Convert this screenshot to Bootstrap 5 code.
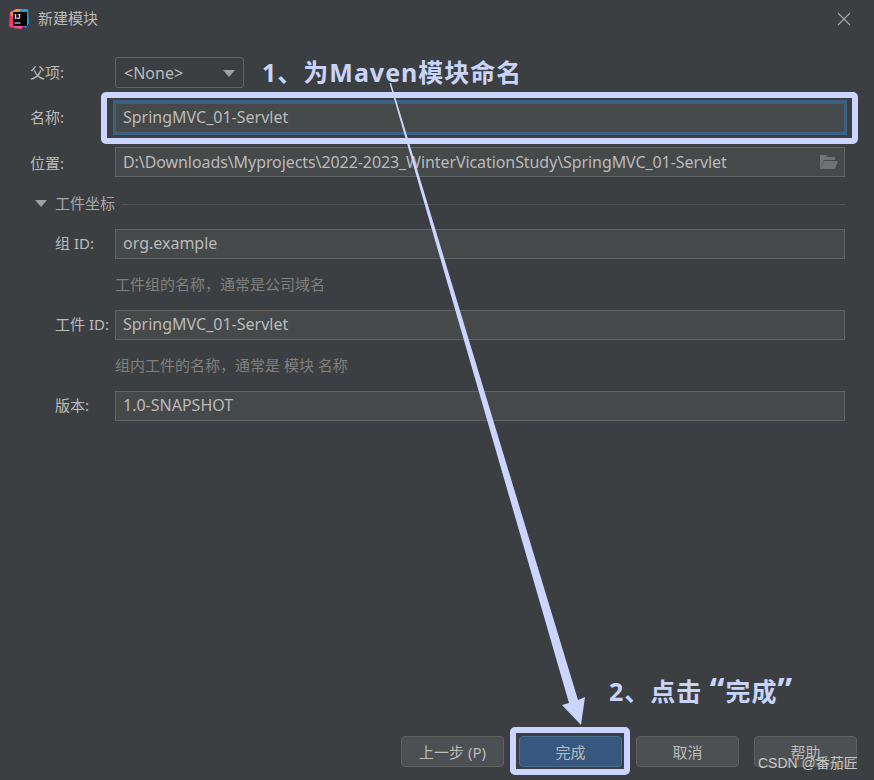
<!DOCTYPE html>
<html lang="zh-CN"><head><meta charset="utf-8">
<link href="https://cdn.jsdelivr.net/npm/bootstrap@5.3.0/dist/css/bootstrap.min.css" rel="stylesheet">
<style>
html,body{margin:0;background:#3c3f41;}
body{font-family:"Noto Sans","Noto Sans CJK SC",sans-serif;font-size:15px;color:#bbbbbb;}
.dlg{width:874px;height:780px;position:relative;overflow:hidden;background:#3c3f41;}
.ttl{height:38px;padding-left:9px;}
.ttl-t{margin-left:9px;font-size:15px;color:#bbb;margin-top:-2px;}
.xbtn{margin-left:auto;margin-right:23px;}
.frm{padding:19px 29px 0 30px;}
.lab{width:85px;flex:none;white-space:nowrap;line-height:20px;margin-top:-3px;}
.lab-up{margin-top:-1px;}
.lab-dn{margin-top:1px;}
.lab2{padding-left:25px;}
.fld{flex:1;height:30px;background:#45494a;border:1px solid #646464;color:#bbb;padding:0 7px;font-size:16px;line-height:26px;white-space:nowrap;position:relative;}
.fld-path{line-height:28px;letter-spacing:-.08px;}
.fld.foc{border-color:#3d6185;box-shadow:0 0 0 2px #3d6185,0 -1px 0 2px #3d6185;}
.sel{width:129px;height:31px;flex:none;border:1px solid #646464;border-radius:3px;background:#3c3f41;padding:0 8px;font-size:16px;line-height:31px;position:relative;}
.tri{width:0;height:0;border-left:6px solid transparent;border-right:6px solid transparent;border-top:7px solid #a0a0a0;display:inline-block;}
.sel .tri{position:absolute;right:8px;top:12px;}
.r1{height:31px;margin-bottom:15px;}
.r2{height:30px;margin-bottom:14px;}
.r3{height:30px;}
.sec{height:20px;margin-top:16px;margin-bottom:16px;font-size:15px;color:#a9a9a9;padding-left:5px;}
.sec .tri{margin-right:8px;}
.sec-l{flex:1;height:1px;background:#515151;margin-left:7px;margin-top:2px;}
.hint{padding-left:85px;color:#808080;font-size:15px;height:51px;line-height:51px;}
.foot{position:absolute;left:401px;top:736px;}
.fbtn{width:103px;height:31px;padding:0;border:1px solid #5e6060;border-radius:4px;background:#4c5052;color:#bbb;font-size:15px;line-height:28px;margin-right:15px;--bs-btn-hover-bg:#4c5052;}
.fbtn.pri{background:#365880;border-color:#4c708c;margin-right:14px;}
.ovl{position:absolute;left:0;top:0;pointer-events:none;}
.note{position:absolute;font-weight:700;color:#c9d4fb;font-size:25px;letter-spacing:1px;line-height:32px;white-space:nowrap;}
.qm{font-size:33px;line-height:0;}
.wm{position:absolute;left:758px;top:753px;font-family:"Liberation Sans","Noto Sans CJK SC",sans-serif;font-size:14px;line-height:20px;color:#c8c8c8;white-space:nowrap;}
</style></head><body>
<div class="dlg">
  <div class="ttl d-flex align-items-center">
    <svg width="20" height="20" viewBox="0 0 20 20"><path d="M1 3 9 0l3 3-9 16-3-2z" fill="#f9346f"/><path d="M9 0h10l1 14-3 5-6-4z" fill="#1f9ce8"/><path d="M2 15l3 4 7 1 4-4z" fill="#f24b9a"/><path d="M1 4 7 0h5L4 9z" fill="#f79a33"/><rect x="4" y="3" width="14" height="14" fill="#000"/><text x="5.5" y="10" font-size="7" font-weight="700" fill="#fff" font-family="Liberation Sans">IJ</text><rect x="5.5" y="13.5" width="6" height="1" fill="#fff"/></svg>
    <span class="ttl-t">新建模块</span>
    <svg class="xbtn" width="14" height="14" viewBox="0 0 14 14"><path d="M1 1 13 13M13 1 1 13" stroke="#a8a8a8" stroke-width="1.1" fill="none"/></svg>
  </div>
  <div class="frm">
    <div class="d-flex align-items-center r1"><span class="lab lab-up">父项:</span><div class="sel">&lt;None&gt;<i class="tri"></i></div></div>
    <div class="d-flex align-items-center r2"><span class="lab">名称:</span><div class="fld foc">SpringMVC_01-Servlet</div></div>
    <div class="d-flex align-items-center r3"><span class="lab lab-dn">位置:</span><div class="fld fld-path">D:\Downloads\Myprojects\2022-2023_WinterVicationStudy\SpringMVC_01-Servlet
      <svg class="ovl" style="left:703px;top:6px" width="20" height="17" viewBox="0 0 20 17"><path d="M1 1h6l2 2h7v3H5L1 15z" fill="#6e7375"/><path d="M5 7h14l-3 8H1z" fill="#6e7375"/></svg></div></div>
    <div class="sec d-flex align-items-center"><i class="tri"></i><span>工件坐标</span><div class="sec-l"></div></div>
    <div class="d-flex align-items-center r3"><span class="lab lab2">组 ID:</span><div class="fld">org.example</div></div>
    <div class="hint">工件组的名称，通常是公司域名</div>
    <div class="d-flex align-items-center r3"><span class="lab lab2">工件 ID:</span><div class="fld">SpringMVC_01-Servlet</div></div>
    <div class="hint">组内工件的名称，通常是 模块 名称</div>
    <div class="d-flex align-items-center r3"><span class="lab lab2">版本:</span><div class="fld">1.0-SNAPSHOT</div></div>
  </div>
  <div class="foot d-flex">
    <button class="btn fbtn" type="button">上一步 (P)</button>
    <button class="btn fbtn pri" type="button">完成</button>
    <button class="btn fbtn" type="button">取消</button>
    <button class="btn fbtn" type="button">帮助</button>
  </div>
  <svg class="ovl" width="874" height="780" viewBox="0 0 874 780">
    <rect x="104" y="95" width="751" height="46" rx="2" fill="none" stroke="#ccd5ff" stroke-width="6"/>
    <rect x="513" y="730" width="114" height="42" rx="2" fill="none" stroke="#ccd5ff" stroke-width="6"/>
    <path d="M389.5 83 391 83 578 700 585 697 581 725 562 705 569 703z" fill="#ccd5ff"/>
  </svg>
  <div class="note" style="left:262px;top:56px">1、为Maven模块命名</div>
  <div class="note" style="left:609px;top:675px">2、点击 <span class="qm">“</span>完成<span class="qm">”</span></div>
  <div class="wm">CSDN @番茄匠</div>
</div>
<script src="https://cdn.jsdelivr.net/npm/bootstrap@5.3.0/dist/js/bootstrap.bundle.min.js"></script>
</body></html>
